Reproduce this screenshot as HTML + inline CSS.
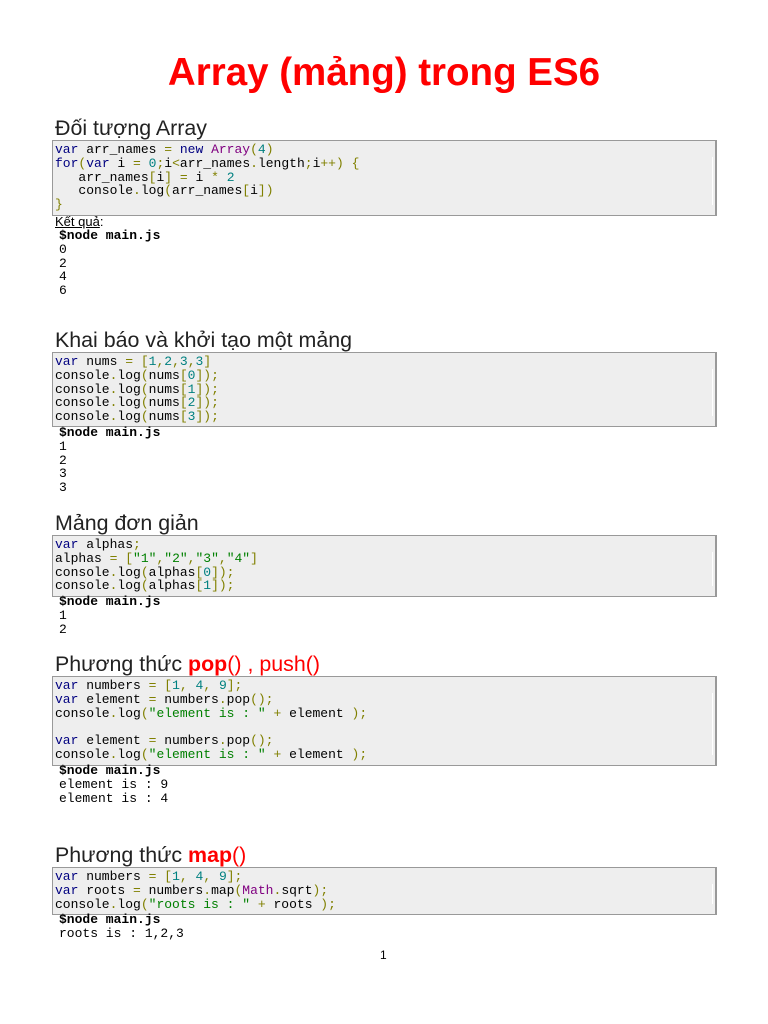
<!DOCTYPE html>
<html><head><meta charset="utf-8"><style>
body{margin:0;background:#fff;width:768px;height:1024px;position:relative;overflow:hidden}
.t{position:absolute;left:0;width:768px;text-align:center;top:50px;font:bold 38.5px "Liberation Sans",sans-serif;color:#f00;line-height:46px}
.h{position:absolute;left:55px;font:21.4px "Liberation Sans","Noto Sans CJK SC",sans-serif;color:#222;line-height:24px;white-space:nowrap}
.h b{color:#f00}.h span{color:#f00}
.box{position:absolute;left:52px;width:662px;background:#eee;border:1px solid #999;border-right:2px solid #999}
.box:after{content:"";position:absolute;right:2px;top:16px;bottom:10px;border-right:1px solid #fff}
pre{margin:0;font:13px/13.8px "Liberation Mono",monospace;color:#000;white-space:pre}
.box pre{padding:2px 0 0 2px}
.out{position:absolute;left:59px}
.k{color:#000080}.p{color:#808000}.n{color:#008080}.c{color:#800080}.s{color:#008000}
.kq{position:absolute;left:55px;top:214px;font:13px "Liberation Sans",sans-serif;color:#000}
.pg{position:absolute;left:380px;top:948px;font:12px "Liberation Sans",sans-serif}
</style></head><body>
<div class="t">Array (mảng) trong ES6</div>

<div class="h" style="top:116px">Đối tượng Array</div>
<div class="box" style="top:140px;height:74px"><pre><span class="k">var</span> arr_names <span class="p">=</span> <span class="k">new</span> <span class="c">Array</span><span class="p">(</span><span class="n">4</span><span class="p">)</span>
<span class="k">for</span><span class="p">(</span><span class="k">var</span> i <span class="p">=</span> <span class="n">0</span><span class="p">;</span>i<span class="p">&lt;</span>arr_names<span class="p">.</span>length<span class="p">;</span>i<span class="p">++)</span> <span class="p">{</span>
   arr_names<span class="p">[</span>i<span class="p">]</span> <span class="p">=</span> i <span class="p">*</span> <span class="n">2</span>
   console<span class="p">.</span>log<span class="p">(</span>arr_names<span class="p">[</span>i<span class="p">])</span>
<span class="p">}</span></pre></div>
<div class="kq"><u>Kết quả</u>:</div>
<pre class="out" style="top:229px"><b>$node main.js</b>
0
2
4
6</pre>

<div class="h" style="top:328px">Khai báo và khởi tạo một mảng</div>
<div class="box" style="top:352px;height:73px"><pre><span class="k">var</span> nums <span class="p">=</span> <span class="p">[</span><span class="n">1</span><span class="p">,</span><span class="n">2</span><span class="p">,</span><span class="n">3</span><span class="p">,</span><span class="n">3</span><span class="p">]</span>
console<span class="p">.</span>log<span class="p">(</span>nums<span class="p">[</span><span class="n">0</span><span class="p">]);</span>
console<span class="p">.</span>log<span class="p">(</span>nums<span class="p">[</span><span class="n">1</span><span class="p">]);</span>
console<span class="p">.</span>log<span class="p">(</span>nums<span class="p">[</span><span class="n">2</span><span class="p">]);</span>
console<span class="p">.</span>log<span class="p">(</span>nums<span class="p">[</span><span class="n">3</span><span class="p">]);</span></pre></div>
<pre class="out" style="top:426px"><b>$node main.js</b>
1
2
3
3</pre>

<div class="h" style="top:511px">Mảng đơn giản</div>
<div class="box" style="top:535px;height:60px"><pre><span class="k">var</span> alphas<span class="p">;</span>
alphas <span class="p">=</span> <span class="p">[</span><span class="s">"1"</span><span class="p">,</span><span class="s">"2"</span><span class="p">,</span><span class="s">"3"</span><span class="p">,</span><span class="s">"4"</span><span class="p">]</span>
console<span class="p">.</span>log<span class="p">(</span>alphas<span class="p">[</span><span class="n">0</span><span class="p">]);</span>
console<span class="p">.</span>log<span class="p">(</span>alphas<span class="p">[</span><span class="n">1</span><span class="p">]);</span></pre></div>
<pre class="out" style="top:595px"><b>$node main.js</b>
1
2</pre>

<div class="h" style="top:652px">Phương thức <b>pop</b><span>() , push()</span></div>
<div class="box" style="top:676px;height:88px"><pre><span class="k">var</span> numbers <span class="p">=</span> <span class="p">[</span><span class="n">1</span><span class="p">,</span> <span class="n">4</span><span class="p">,</span> <span class="n">9</span><span class="p">];</span>
<span class="k">var</span> element <span class="p">=</span> numbers<span class="p">.</span>pop<span class="p">();</span>
console<span class="p">.</span>log<span class="p">(</span><span class="s">"element is : "</span> <span class="p">+</span> element <span class="p">);</span>

<span class="k">var</span> element <span class="p">=</span> numbers<span class="p">.</span>pop<span class="p">();</span>
console<span class="p">.</span>log<span class="p">(</span><span class="s">"element is : "</span> <span class="p">+</span> element <span class="p">);</span></pre></div>
<pre class="out" style="top:764px"><b>$node main.js</b>
element is : 9
element is : 4</pre>

<div class="h" style="top:843px">Phương thức <b>map</b><span>()</span></div>
<div class="box" style="top:867px;height:46px"><pre><span class="k">var</span> numbers <span class="p">=</span> <span class="p">[</span><span class="n">1</span><span class="p">,</span> <span class="n">4</span><span class="p">,</span> <span class="n">9</span><span class="p">];</span>
<span class="k">var</span> roots <span class="p">=</span> numbers<span class="p">.</span>map<span class="p">(</span><span class="c">Math</span><span class="p">.</span>sqrt<span class="p">);</span>
console<span class="p">.</span>log<span class="p">(</span><span class="s">"roots is : "</span> <span class="p">+</span> roots <span class="p">);</span></pre></div>
<pre class="out" style="top:913px"><b>$node main.js</b>
roots is : 1,2,3</pre>

<div class="pg">1</div>
</body></html>
